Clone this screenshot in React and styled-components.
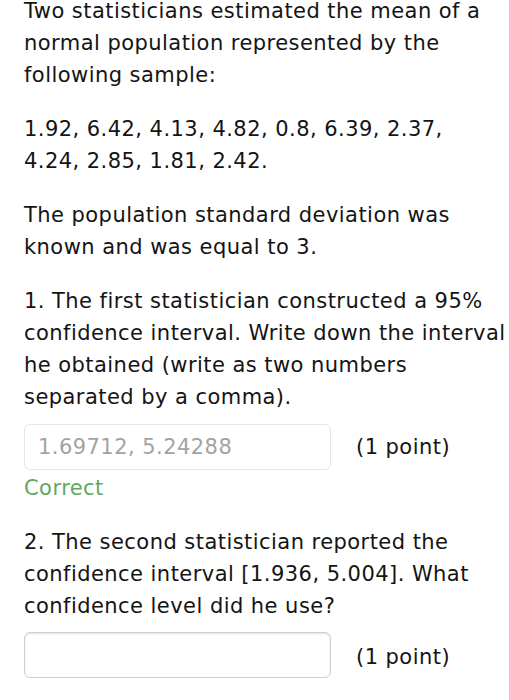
import React from "react";
import styled, { createGlobalStyle } from "styled-components";

const GlobalStyle = createGlobalStyle`
  html, body {
    margin: 0;
    padding: 0;
    background: #ffffff;
  }
  body {
    font-family: "DejaVu Sans", Verdana, sans-serif;
    color: #141414;
    overflow: hidden;
  }
`;

const Page = styled.main`
  display: flex;
  flex-direction: column;
  padding: 0 0 0 24px;
  margin-top: -5px;
  font-size: 21px;
  line-height: 32px;
  letter-spacing: 0.45px;
`;

const Paragraph = styled.p`
  margin: 0 0 22px;
  white-space: nowrap;
`;

const Question = styled.section`
  display: flex;
  flex-direction: column;
  margin-bottom: 22px;
`;

const Prompt = styled.p`
  margin: 0;
  white-space: nowrap;
`;

const AnswerRow = styled.div`
  display: flex;
  align-items: center;
  gap: 25px;
  margin-top: ${(p) => p.$gap}px;
`;

const AnswerInput = styled.input`
  box-sizing: border-box;
  width: 307px;
  height: 46px;
  margin: 0;
  padding: 0 13px;
  font: inherit;
  letter-spacing: inherit;
  color: #a3a3a3;
  background: #ffffff;
  border: 1px solid ${(p) => (p.$graded ? "#e6e6e6" : "#cfcfcf")};
  border-radius: 6px;
  box-shadow: ${(p) =>
    p.$graded ? "none" : "inset 0 1px 2px rgba(0, 0, 0, 0.12)"};
  outline: none;
`;

const Points = styled.span`
  white-space: nowrap;
  color: #141414;
  padding-top: ${(p) => (p.$low ? 3 : 0)}px;
`;

const Feedback = styled.div`
  margin-top: 2px;
  color: #5fa85f;
`;

export default function App() {
  return (
    <>
      <GlobalStyle />
      <Page>
        <Paragraph>
          Two statisticians estimated the mean of a
          <br />
          normal population represented by the
          <br />
          following sample:
        </Paragraph>
        <Paragraph>
          1.92, 6.42, 4.13, 4.82, 0.8, 6.39, 2.37,
          <br />
          4.24, 2.85, 1.81, 2.42.
        </Paragraph>
        <Paragraph>
          The population standard deviation was
          <br />
          known and was equal to 3.
        </Paragraph>

        <Question>
          <Prompt>
            1. The first statistician constructed a 95%
            <br />
            confidence interval. Write down the interval
            <br />
            he obtained (write as two numbers
            <br />
            separated by a comma).
          </Prompt>
          <AnswerRow $gap={11}>
            <AnswerInput $graded readOnly defaultValue="1.69712, 5.24288" />
            <Points>(1 point)</Points>
          </AnswerRow>
          <Feedback>Correct</Feedback>
        </Question>

        <Question>
          <Prompt>
            2. The second statistician reported the
            <br />
            confidence interval [1.936, 5.004]. What
            <br />
            confidence level did he use?
          </Prompt>
          <AnswerRow $gap={10}>
            <AnswerInput defaultValue="" />
            <Points $low>(1 point)</Points>
          </AnswerRow>
        </Question>
      </Page>
    </>
  );
}
